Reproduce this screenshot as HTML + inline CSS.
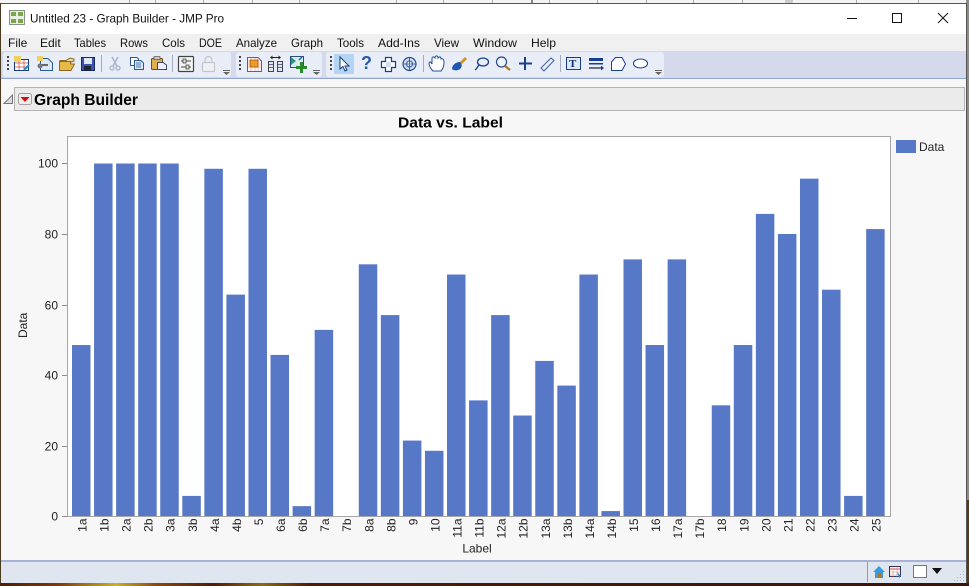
<!DOCTYPE html>
<html><head><meta charset="utf-8"><style>
html,body{margin:0;padding:0;width:969px;height:586px;overflow:hidden;background:#fff}
svg{display:block}
text{font-family:"Liberation Sans",sans-serif}
</style></head><body>
<svg width="969" height="586" viewBox="0 0 969 586" xmlns="http://www.w3.org/2000/svg">
<defs><linearGradient id="d" x1="0" x2="1" y1="0" y2="0">
<stop offset="0" stop-color="#4a1c0a"/><stop offset=".06" stop-color="#7a3a0c"/><stop offset=".12" stop-color="#c8b030"/><stop offset=".16" stop-color="#8a4a10"/><stop offset=".22" stop-color="#4a1c0a"/><stop offset=".27" stop-color="#8a6a18"/><stop offset=".32" stop-color="#4a1c0a"/><stop offset="1" stop-color="#3a1608"/>
</linearGradient></defs>
<!-- desktop behind -->
<rect width="969" height="586" fill="#e8e8e8"/>
<rect y="0" width="969" height="3" fill="#f4f4f4"/>
<g stroke="#a8a8a8" stroke-width="1"><path d="M129.500 0V3M155.500 0V3M203.500 0V3M252.500 0V3M299.500 0V3M396.500 0V3M443.500 0V3M492.500 0V3M549.500 0V3M597.500 0V3M646.500 0V3M693.500 0V3M742.500 0V3M856.500 0V3M918.500 0V3"/></g>
<rect x="531" y="0" width="2" height="3" fill="#888"/>
<rect x="785" y="0" width="8" height="3" fill="#ccc"/>
<rect x="966" y="0" width="3" height="586" fill="#8f8a80"/>
<rect x="966" y="500" width="3" height="86" fill="#5a3a10"/>
<rect x="0" y="583" width="969" height="3" fill="url(#d)"/>
<rect x="0" y="3" width="1" height="580" fill="#4a3a20"/>
<!-- window -->
<rect x="1" y="3" width="965" height="580" fill="#f7f7f7"/>
<rect x="1" y="3" width="965" height="1" fill="#555"/>
<rect x="966" y="3" width="1" height="580" fill="#555"/>
<rect x="1" y="4" width="965" height="30" fill="#fff"/>
<!-- app icon -->
<g>
<rect x="9.500" y="10.500" width="15" height="14" fill="#e8efe4" stroke="#8a8f8a"/>
<rect x="11" y="12" width="5" height="4" fill="#7aa848"/><rect x="18" y="12" width="5" height="4" fill="#7aa848"/>
<rect x="11" y="19" width="5" height="4" fill="#7aa848"/><rect x="18" y="19" width="5" height="4" fill="#7aa848"/>
</g>
<text x="30" y="22.500" font-size="12" textLength="194" lengthAdjust="spacingAndGlyphs" fill="#111">Untitled 23 - Graph Builder - JMP Pro</text>
<!-- window controls -->
<path d="M847 18.500H857" stroke="#111" stroke-width="1"/>
<rect x="892.500" y="13.500" width="9" height="9" fill="none" stroke="#111"/>
<path d="M938 13L948 23M948 13L938 23" stroke="#111" stroke-width="1"/>
<!-- menu -->
<rect x="1" y="34" width="965" height="17" fill="#f0f0f0"/>
<g font-size="12" fill="#111">
<text x="8" y="47">File</text>
<text x="40" y="47">Edit</text>
<text x="74" y="47" textLength="32" lengthAdjust="spacingAndGlyphs">Tables</text>
<text x="120" y="47" textLength="28" lengthAdjust="spacingAndGlyphs">Rows</text>
<text x="162" y="47" textLength="23" lengthAdjust="spacingAndGlyphs">Cols</text>
<text x="199" y="47" textLength="23" lengthAdjust="spacingAndGlyphs">DOE</text>
<text x="236" y="47" textLength="41" lengthAdjust="spacingAndGlyphs">Analyze</text>
<text x="291" y="47" textLength="32" lengthAdjust="spacingAndGlyphs">Graph</text>
<text x="337" y="47" textLength="27" lengthAdjust="spacingAndGlyphs">Tools</text>
<text x="378" y="47" textLength="42" lengthAdjust="spacingAndGlyphs">Add-Ins</text>
<text x="434" y="47" textLength="25" lengthAdjust="spacingAndGlyphs">View</text>
<text x="473" y="47" textLength="44" lengthAdjust="spacingAndGlyphs">Window</text>
<text x="531" y="47" textLength="25" lengthAdjust="spacingAndGlyphs">Help</text>
</g>
<!-- toolbar -->
<rect x="1" y="51" width="965" height="27" fill="#d4daec"/>
<rect x="1" y="78" width="965" height="1" fill="#93a5d2"/>
<rect x="3" y="52" width="228" height="25" rx="3" fill="#e9edf7"/>
<rect x="236" y="52" width="86" height="25" rx="3" fill="#e9edf7"/>
<rect x="326" y="52" width="338" height="25" rx="3" fill="#e9edf7"/>
<!-- grips -->
<g fill="#444">
<rect x="7" y="56" width="2" height="2"/><rect x="7" y="60" width="2" height="2"/><rect x="7" y="64" width="2" height="2"/><rect x="7" y="68" width="2" height="2"/>
<rect x="239" y="56" width="2" height="2"/><rect x="239" y="60" width="2" height="2"/><rect x="239" y="64" width="2" height="2"/><rect x="239" y="68" width="2" height="2"/>
<rect x="330" y="56" width="2" height="2"/><rect x="330" y="60" width="2" height="2"/><rect x="330" y="64" width="2" height="2"/><rect x="330" y="68" width="2" height="2"/>
</g>
<!-- overflow arrows -->
<g fill="#666">
<rect x="223" y="70" width="7" height="1"/><path d="M223 72H230L226.500 75Z"/>
<rect x="313" y="70" width="7" height="1"/><path d="M313 72H320L316.500 75Z"/>
<rect x="655" y="70" width="7" height="1"/><path d="M655 72H662L658.500 75Z"/>
</g>
<!-- separators -->
<g stroke="#a6adbd"><path d="M101.500 55V72M172.500 55V72M423.500 55V72M560.500 55V72"/></g>
<!-- new table -->
<rect x="14.500" y="59.500" width="14" height="11" fill="#fff" stroke="#1a3d7a"/>
<path d="M15 63H28M15 67H28M19 60V70M24 60V70" stroke="#d04848" stroke-width=".7"/>
<rect x="14" y="56" width="7" height="6" fill="#f0d060"/>
<path d="M24 70L29 65" stroke="#2a8ad0" stroke-width="2"/>
<!-- new script -->
<path d="M40.500 58.500H48L52.500 63V70.500H40.500Z" fill="#dce8f6" stroke="#2a5a98"/>
<rect x="37" y="56" width="6" height="5" fill="#f0d060"/>
<rect x="38" y="64" width="10" height="2" fill="#666"/><circle cx="40" cy="66" r="2.500" fill="#777"/>
<!-- open -->
<path d="M60 60.500H66L70 58L74 59V61L71 62H60Z" fill="#e8d8a8" stroke="#8a6a20"/>
<path d="M59.500 70.500V61.500H70.500V64H74.500L71 70.500Z" fill="#e8b848" stroke="#8a6a20"/>
<!-- save -->
<rect x="81.500" y="57.500" width="13" height="13" fill="#3a55a8" stroke="#1a2a68"/>
<rect x="84" y="58" width="8" height="6" fill="#dfe6f4"/><rect x="84" y="66" width="7" height="4" fill="#223"/>
<!-- cut -->
<path d="M112 57L117 66M118 57L113 66" stroke="#a8b4c8" stroke-width="1.500"/>
<circle cx="112" cy="68" r="2" fill="none" stroke="#a8b4c8" stroke-width="1.300"/><circle cx="118" cy="68" r="2" fill="none" stroke="#a8b4c8" stroke-width="1.300"/>
<!-- copy -->
<path d="M130.500 57.500H137L138.500 59V65.500H130.500Z" fill="#fff" stroke="#2a5a98"/>
<path d="M134.500 60.500H141L143.500 63V69.500H134.500Z" fill="#dbe6f6" stroke="#2a5a98"/>
<path d="M136 63H141M136 65H141M136 67H141" stroke="#2a5a98" stroke-width=".8"/>
<!-- paste -->
<rect x="151.500" y="58.500" width="11" height="11" rx="1" fill="#e0b050" stroke="#6a5020"/>
<rect x="154" y="56.500" width="6" height="3" fill="#c8c8c8" stroke="#555" stroke-width=".7"/>
<path d="M157.500 62.500H163L166.500 65V69.500H157.500Z" fill="#eef" stroke="#3a4a68"/>
<!-- settings -->
<rect x="178.500" y="56.500" width="15" height="15" rx="1" fill="#f4f4f4" stroke="#444" stroke-width="1.200"/>
<path d="M181 61H191M181 67H191" stroke="#444"/><rect x="183" y="59" width="3" height="4" fill="#ddd" stroke="#444" stroke-width=".8"/><rect x="186" y="65" width="3" height="4" fill="#ddd" stroke="#444" stroke-width=".8"/>
<!-- lock -->
<rect x="202.500" y="62.500" width="12" height="9" rx="1" fill="#eef0f4" stroke="#c2c6cc" stroke-width="1.200"/>
<path d="M205 62V60A3.500 3.500 0 0 1 212 60V62" fill="none" stroke="#c2c6cc" stroke-width="1.200"/>
<!-- data view -->
<path d="M247.500 57.500H258L261.500 61V71.500H247.500Z" fill="#fff" stroke="#5a5aa0"/>
<path d="M248 61H261M248 64H261M248 67H261M251 58V71M255 58V71M258 58V71" stroke="#e08080" stroke-width=".6"/>
<rect x="250" y="60" width="8" height="7" fill="#e8a020" stroke="#c04818" stroke-width=".8"/>
<!-- columns -->
<path d="M271 57.500H280" stroke="#222"/><path d="M270 57.500L272.500 55.500V59.500ZM281 57.500L278.500 55.500V59.500Z" fill="#222"/>
<rect x="268.500" y="61.500" width="5" height="10" fill="#dfe6f0" stroke="#445"/>
<rect x="277.500" y="61.500" width="5" height="10" fill="#dfe6f0" stroke="#445"/>
<path d="M269 64.500H273M269 67.500H273M278 64.500H282M278 67.500H282" stroke="#445" stroke-width=".7"/>
<!-- add -->
<rect x="290.500" y="56.500" width="13" height="11" fill="#dceaf6" stroke="#2a5080"/>
<path d="M291 57L296 61L291 65Z" fill="#2a9a70"/>
<path d="M299 60L302 57" stroke="#1a70c0" stroke-width="1.500"/>
<path d="M300 62H303V66H307V69H303V73H300V69H296V66H300Z" fill="#2a8a2a"/>
<!-- arrow selected -->
<rect x="334" y="54" width="20" height="20" fill="#b4d4f4"/>
<path d="M340 57V69L343 66.500L345 71L347 70L345 66H349Z" fill="#fff" stroke="#1a3a80"/>
<!-- help -->
<text x="361" y="69" font-size="18" font-weight="bold" fill="#2a5aa0">?</text>
<!-- crosshair box -->
<path d="M385.500 57.500H391.500V61.500H395.500V67.500H391.500V71.500H385.500V67.500H381.500V61.500H385.500Z" fill="#fff" stroke="#173f90" stroke-width="1.200"/>
<rect x="386" y="62" width="5" height="5" fill="#cfe0f4"/>
<!-- target -->
<circle cx="409.500" cy="64" r="6.500" fill="#cfdcf2" stroke="#274f90" stroke-width="1.200"/>
<circle cx="409.500" cy="64" r="3" fill="#fff" stroke="#274f90"/>
<path d="M409.500 58V70M403.500 64H415.500" stroke="#274f90" stroke-width=".8"/>
<!-- hand -->
<path d="M433 71C430 68 429 66 429 63C430 61 431 62 432 64V58C433 56 434 57 435 58V57C436 55 438 56 438 58C440 56 441 57 441 59C443 58 444 60 444 62C444 66 443 69 441 71Z" fill="#fff" stroke="#274f90"/>
<!-- brush -->
<path d="M452 69C452 65 456 62 460 62C463 64 462 69 458 70C456 71 453 70 452 69Z" fill="#1e56b0"/>
<path d="M460 62L465 57L467 59L462 64Z" fill="#c8962a"/>
<!-- lasso -->
<ellipse cx="483" cy="62" rx="5.500" ry="4" fill="none" stroke="#173f90" stroke-width="1.300"/>
<path d="M479 65C477 67 477 69 475 70" fill="none" stroke="#173f90" stroke-width="1.300"/>
<!-- magnifier -->
<circle cx="501.500" cy="62" r="5" fill="#eef4fc" stroke="#2a4a88" stroke-width="1.200"/>
<path d="M505 66L510 70" stroke="#a87818" stroke-width="2.200"/>
<!-- plus -->
<path d="M525 57V70M519 63.500H532" stroke="#173f90" stroke-width="2"/>
<!-- ruler -->
<path d="M541 68L551 58L554 60.500L544 71Z" fill="#e9edf7" stroke="#4a66a8" stroke-width="1.100"/>
<!-- text box -->
<rect x="566.500" y="57.500" width="14" height="12" fill="#dce8f6" stroke="#173f90"/>
<text x="569" y="67" font-size="11" font-weight="bold" fill="#112a70" style="font-family:'Liberation Serif',serif">T</text>
<!-- lines -->
<rect x="589" y="58" width="14" height="3" fill="#173f90"/>
<rect x="589" y="63" width="14" height="1.500" fill="#173f90"/>
<path d="M589 68H601" stroke="#445" stroke-width="1.500"/><path d="M601 65.500L604 68L601 70.500Z" fill="#173f90"/>
<!-- polygon -->
<path d="M611.500 70.500V62L615.500 57.500H622L625.500 64L622 70.500Z" fill="#fff" stroke="#173f90"/>
<!-- ellipse -->
<ellipse cx="640.500" cy="63.500" rx="7" ry="4.500" fill="#fff" stroke="#173f90" stroke-width="1.100"/>

<!-- outline header -->
<rect x="14.500" y="87.500" width="950" height="23" fill="#ebebeb" stroke="#b4b4b4"/>
<path d="M4 103.500H12.500V95Z" fill="#dcdcdc" stroke="#777" stroke-width="1"/>
<rect x="18.500" y="93.500" width="13" height="11" rx="2" fill="#f0ecec" stroke="#a8a0a0"/>
<path d="M20.500 97H29.500L25 102Z" fill="#d01010"/>
<text x="34" y="105" font-size="15.500" font-weight="bold" fill="#000" textLength="104" lengthAdjust="spacingAndGlyphs">Graph Builder</text>
<!-- graph title -->
<text x="398" y="127.500" font-size="15" font-weight="bold" fill="#000" textLength="105" lengthAdjust="spacingAndGlyphs">Data vs. Label</text>
<!-- plot -->
<rect x="67.500" y="136.500" width="823" height="380" fill="#fff" stroke="#a6a6a6"/>
<g transform="translate(0,516) scale(1,-3.525)" fill="#5778c6">
<rect x="72" width="18.500" height="48.500"/>
<rect x="94.060" width="18.500" height="100"/>
<rect x="116.120" width="18.500" height="100"/>
<rect x="138.180" width="18.500" height="100"/>
<rect x="160.240" width="18.500" height="100"/>
<rect x="182.300" width="18.500" height="5.700"/>
<rect x="204.360" width="18.500" height="98.500"/>
<rect x="226.420" width="18.500" height="62.800"/>
<rect x="248.480" width="18.500" height="98.500"/>
<rect x="270.540" width="18.500" height="45.700"/>
<rect x="292.600" width="18.500" height="2.800"/>
<rect x="314.660" width="18.500" height="52.800"/>
<rect x="358.780" width="18.500" height="71.400"/>
<rect x="380.840" width="18.500" height="57"/>
<rect x="402.900" width="18.500" height="21.400"/>
<rect x="424.960" width="18.500" height="18.500"/>
<rect x="447.020" width="18.500" height="68.500"/>
<rect x="469.080" width="18.500" height="32.800"/>
<rect x="491.140" width="18.500" height="57"/>
<rect x="513.200" width="18.500" height="28.500"/>
<rect x="535.260" width="18.500" height="44"/>
<rect x="557.320" width="18.500" height="37"/>
<rect x="579.380" width="18.500" height="68.500"/>
<rect x="601.440" width="18.500" height="1.400"/>
<rect x="623.500" width="18.500" height="72.800"/>
<rect x="645.560" width="18.500" height="48.500"/>
<rect x="667.620" width="18.500" height="72.800"/>
<rect x="711.740" width="18.500" height="31.400"/>
<rect x="733.800" width="18.500" height="48.500"/>
<rect x="755.860" width="18.500" height="85.700"/>
<rect x="777.920" width="18.500" height="80"/>
<rect x="799.980" width="18.500" height="95.700"/>
<rect x="822.040" width="18.500" height="64.200"/>
<rect x="844.100" width="18.500" height="5.700"/>
<rect x="866.160" width="18.500" height="81.400"/>
</g>
<!-- y axis -->
<g stroke="#8c8c8c"><path d="M62 516.500H67M62 446.500H67M62 375.500H67M62 305.500H67M62 234.500H67M62 163.500H67"/></g>
<g font-size="12" fill="#222" text-anchor="end">
<text x="58" y="520.500">0</text>
<text x="58" y="450.500">20</text>
<text x="58" y="379.500">40</text>
<text x="58" y="309.500">60</text>
<text x="58" y="238.500">80</text>
<text x="58" y="167.500">100</text>
</g>
<text transform="translate(27,338) rotate(-90)" font-size="12" fill="#222">Data</text>
<text x="477" y="552.500" font-size="12" text-anchor="middle" fill="#222">Label</text>
<!-- x labels -->
<g font-size="12" fill="#222" text-anchor="end">
<text transform="translate(86.500,518.500) rotate(-90)">1a</text>
<text transform="translate(108.600,518.500) rotate(-90)">1b</text>
<text transform="translate(130.600,518.500) rotate(-90)">2a</text>
<text transform="translate(152.700,518.500) rotate(-90)">2b</text>
<text transform="translate(174.700,518.500) rotate(-90)">3a</text>
<text transform="translate(196.800,518.500) rotate(-90)">3b</text>
<text transform="translate(218.900,518.500) rotate(-90)">4a</text>
<text transform="translate(240.900,518.500) rotate(-90)">4b</text>
<text transform="translate(263,518.500) rotate(-90)">5</text>
<text transform="translate(285,518.500) rotate(-90)">6a</text>
<text transform="translate(307.100,518.500) rotate(-90)">6b</text>
<text transform="translate(329.200,518.500) rotate(-90)">7a</text>
<text transform="translate(351.200,518.500) rotate(-90)">7b</text>
<text transform="translate(373.300,518.500) rotate(-90)">8a</text>
<text transform="translate(395.300,518.500) rotate(-90)">8b</text>
<text transform="translate(417.400,518.500) rotate(-90)">9</text>
<text transform="translate(439.500,518.500) rotate(-90)">10</text>
<text transform="translate(461.500,518.500) rotate(-90)">11a</text>
<text transform="translate(483.600,518.500) rotate(-90)">11b</text>
<text transform="translate(505.600,518.500) rotate(-90)">12a</text>
<text transform="translate(527.700,518.500) rotate(-90)">12b</text>
<text transform="translate(549.800,518.500) rotate(-90)">13a</text>
<text transform="translate(571.800,518.500) rotate(-90)">13b</text>
<text transform="translate(593.900,518.500) rotate(-90)">14a</text>
<text transform="translate(615.900,518.500) rotate(-90)">14b</text>
<text transform="translate(638,518.500) rotate(-90)">15</text>
<text transform="translate(660.100,518.500) rotate(-90)">16</text>
<text transform="translate(682.100,518.500) rotate(-90)">17a</text>
<text transform="translate(704.200,518.500) rotate(-90)">17b</text>
<text transform="translate(726.200,518.500) rotate(-90)">18</text>
<text transform="translate(748.300,518.500) rotate(-90)">19</text>
<text transform="translate(770.400,518.500) rotate(-90)">20</text>
<text transform="translate(792.400,518.500) rotate(-90)">21</text>
<text transform="translate(814.500,518.500) rotate(-90)">22</text>
<text transform="translate(836.500,518.500) rotate(-90)">23</text>
<text transform="translate(858.600,518.500) rotate(-90)">24</text>
<text transform="translate(880.700,518.500) rotate(-90)">25</text>
</g>
<!-- legend -->
<rect x="896" y="140" width="20" height="13" fill="#5778c6"/>
<text x="919" y="151" font-size="12" fill="#222">Data</text>
<!-- status -->
<rect x="1" y="560" width="965" height="2" fill="#a8b2d8"/>
<rect x="1" y="562" width="965" height="21" fill="#e0e6f0"/>
<rect x="867" y="562" width="1" height="20" fill="#9a9a9a"/>
<path d="M873 572L879 566L885 572H883V578H875V572Z" fill="#3a9ae0"/>
<rect x="878" y="573" width="3" height="5" fill="#b07818"/>
<rect x="889.500" y="566.500" width="11" height="10" fill="#fff" stroke="#335"/>
<path d="M890 569H900" stroke="#d04848"/><path d="M890 572H900M890 575H900M893 567V577M897 567V577" stroke="#c88" stroke-width=".5"/>
<path d="M897 572L901 576L899 578Z" fill="#2a8ad0"/>
<rect x="913.500" y="565.500" width="13" height="12" fill="#fff" stroke="#777"/>
<path d="M932 568H942L937 574Z" fill="#111"/>
<g fill="#b8bcc4"><rect x="963" y="571" width="1" height="1"/><rect x="960" y="574" width="1" height="1"/><rect x="963" y="574" width="1" height="1"/><rect x="957" y="577" width="1" height="1"/><rect x="960" y="577" width="1" height="1"/><rect x="963" y="577" width="1" height="1"/><rect x="954" y="580" width="1" height="1"/><rect x="957" y="580" width="1" height="1"/><rect x="960" y="580" width="1" height="1"/><rect x="963" y="580" width="1" height="1"/></g>
</svg>
</body></html>
